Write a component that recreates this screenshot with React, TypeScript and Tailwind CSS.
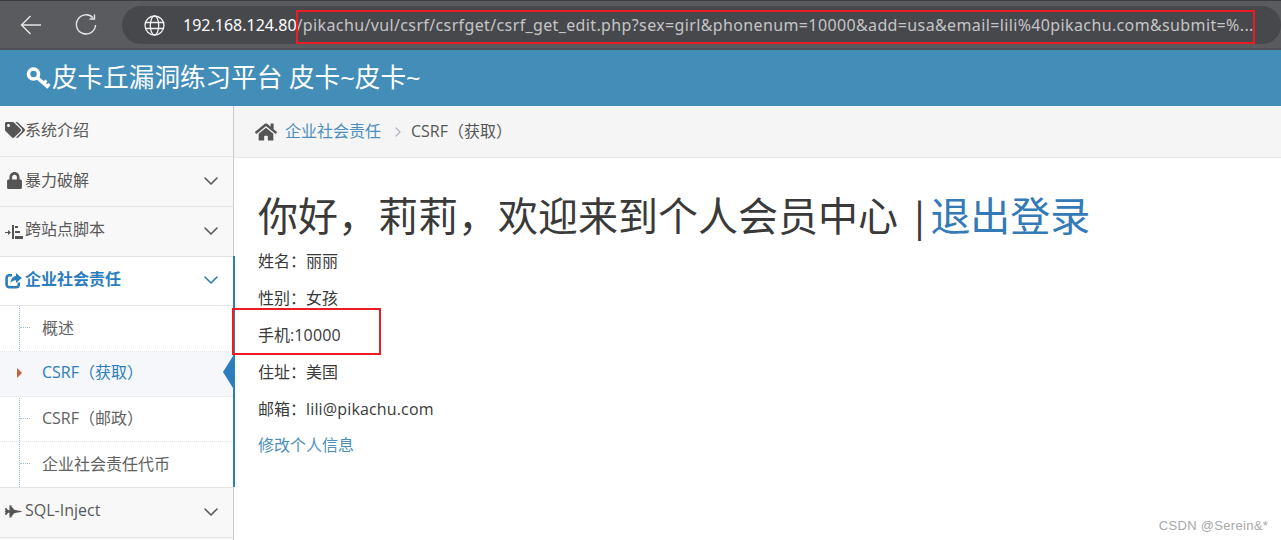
import { FaTags, FaLock, FaHome, FaFighterJet } from "react-icons/fa";
import { FiChevronDown, FiChevronRight } from "react-icons/fi";

function IndentIcon() {
  return (
    <svg width="18" height="14" viewBox="0 0 18 14" className="text-[#555]" fill="currentColor">
      <rect x="0" y="7" width="4" height="1" />
      <path d="M3 5 L6 7.5 L3 10Z" />
      <rect x="7" y="0" width="2" height="14" />
      <rect x="10" y="1" width="3" height="2" />
      <rect x="10" y="6" width="5" height="2" />
      <rect x="10" y="11" width="8" height="3" />
    </svg>
  );
}

function BackIcon() {
  return (
    <svg width="22" height="20" viewBox="0 0 22 20" fill="none" stroke="#e6e6e6" strokeWidth="1.4">
      <path d="M21 10H1.5M10.5 1 1.5 10l9 9" />
    </svg>
  );
}

function ReloadIcon() {
  return (
    <svg width="22" height="22" viewBox="0 0 22 22" fill="none" stroke="#e6e6e6" strokeWidth="1.4">
      <path d="M18 3.8A9.6 9.6 0 1 0 20.6 11" />
      <path d="M19.5 0.5V5H14.5" />
    </svg>
  );
}

function GlobeIcon() {
  return (
    <svg width="21" height="21" viewBox="0 0 21 21" fill="none" stroke="#f0f0f0" strokeWidth="1.3" className="shrink-0">
      <circle cx="10.5" cy="10.5" r="9.5" />
      <ellipse cx="10.5" cy="10.5" rx="4.2" ry="9.5" />
      <path d="M1.5 7.5H19.5M1.5 13.5H19.5" />
    </svg>
  );
}

function KeyIcon() {
  return (
    <svg width="25" height="25" viewBox="0 0 25 25" fill="none" stroke="#fff" className="shrink-0 -ml-[1px] mr-[1px]">
      <circle cx="7.5" cy="8" r="5" strokeWidth="3.6" />
      <path d="M11 11.5 22.5 21.5" strokeWidth="3.6" />
      <path d="M17.5 17.5 20.5 14.5M21 20.5 23.5 18" strokeWidth="3" />
    </svg>
  );
}

function ShareIcon() {
  return (
    <svg width="17" height="16" viewBox="0 0 17 16" className="text-[#2b7dbc]">
      <path d="M7 2.2H4.5A2.8 2.8 0 0 0 1.6 5v6.5a2.8 2.8 0 0 0 2.9 2.8H11a2.8 2.8 0 0 0 2.8-2.8V9.5" fill="none" stroke="currentColor" strokeWidth="2.6" />
      <path d="M11 0 16.8 5 11 10V7.2C8.5 7.2 6.6 8 5.6 10.2 5.6 6.4 7.6 3.4 11 3Z" fill="currentColor" />
    </svg>
  );
}

function TopRow({ icon, label, chevron = true, active = false, h = "h-[50px]", offset = "" }: { icon: React.ReactNode; label: string; chevron?: boolean; active?: boolean; h?: string; offset?: string }) {
  return (
    <div className={`${h} flex items-center border-b border-[#e5e5e5] pl-[5px] pr-[10px] ${active ? "bg-white text-[#2b7dbc] font-bold" : "bg-[#f8f8f8] text-[#585858]"}`}>
      <span className="w-[20px] flex items-center shrink-0">{icon}</span>
      <span className={`flex-1 text-[16px] leading-5 ${offset}`}>{label}</span>
      {chevron && <FiChevronDown size={24} strokeWidth={1.6} className="shrink-0 -mt-[2px]" />}
    </div>
  );
}

function SubRow({ label, active = false, h = "h-[45px]", border = true, offset = "" }: { label: string; active?: boolean; h?: string; border?: boolean; offset?: string }) {
  return (
    <div className={`${h} relative flex items-center pl-[42px] text-[16px] ${border ? "border-b border-dotted border-[#e4e4e4]" : ""} ${active ? "bg-[#f5f7fa] text-[#2b7dbc]" : "text-[#616161]"}`}>
      {active ? (
        <span className="absolute left-[17px] top-[16px] border-l-[5px] border-y-[5px] border-y-transparent border-l-[#c86139]" />
      ) : (
        <span className="absolute left-[20px] top-[21px] w-[10px] border-t border-dotted border-[#9dbdd6]" />
      )}
      {active && <span className="absolute right-0 top-[4px] border-r-[10px] border-y-[16px] border-y-transparent border-r-[#2b7dbc]" />}
      <span className={offset}>{label}</span>
    </div>
  );
}

export default function App() {
  return (
    <div
      className="relative w-[1281px] h-[540px] overflow-hidden bg-white flex flex-col"
      style={{ fontFamily: '"Open Sans", "Noto Sans CJK SC", sans-serif' }}
    >
      {/* browser toolbar */}
      <div className="h-[50px] shrink-0 bg-[#5a5b5f] border-t border-[#3c3d41] border-b-2 border-b-[#505054] flex items-center pl-[20px] text-white">
        <BackIcon />
        <span className="ml-[33px]"><ReloadIcon /></span>
        <div className="ml-[25px] flex-1 h-[38px] mt-[1px] rounded-[19px] bg-[#47484c] flex items-center pl-[22px] overflow-hidden">
          <GlobeIcon />
          <span className="ml-[18px] text-[16px] whitespace-nowrap" style={{ fontFamily: '"Noto Sans", sans-serif' }}>
            <span className="text-white">192.168.124.80</span>
            <span className="text-[#c4c5c7] tracking-[0.37px]">/pikachu/vul/csrf/csrfget/csrf_get_edit.php?sex=girl&amp;phonenum=10000&amp;add=usa&amp;email=lili%40pikachu.com&amp;submit=%...</span>
          </span>
        </div>
      </div>

      {/* blue header */}
      <div className="h-[56px] shrink-0 bg-[#438eb9] flex items-center pl-[27px] text-white text-[25.6px]">
        <KeyIcon />
        <span className="whitespace-nowrap">皮卡丘漏洞练习平台 皮卡~皮卡~</span>
      </div>

      <div className="flex-1 flex min-h-0">
        {/* sidebar */}
        <div className="w-[234px] shrink-0 border-r border-[#cccccc] flex flex-col bg-[#f8f8f8]">
          <TopRow icon={<FaTags size={20} className="text-[#555] -mt-[3px]" />} label="系统介绍" chevron={false} h="h-[51px]" offset="-mt-[2px]" />
          <TopRow icon={<FaLock size={17} className="text-[#555] ml-[1px] -mt-[2px]" />} label="暴力破解" offset="-mt-[4px]" />
          <TopRow icon={<IndentIcon />} label="跨站点脚本" offset="-mt-[6px]" />
          <div className="relative -mt-px pt-px border-r-2 border-[#2b7dbc] -mr-[2px]">
            <TopRow active icon={<ShareIcon />} label="企业社会责任" h="h-[49px]" offset="-mt-[4px]" />
            <div className="relative bg-white">
              <span className="absolute left-[19px] top-0 bottom-0 border-l border-dotted border-[#9dbdd6]" />
              <SubRow label="概述" h="h-[46px]" offset="-mt-[2px]" />
              <SubRow label="CSRF（获取）" active offset="-mt-[4px]" />
              <SubRow label="CSRF（邮政）" offset="-mt-[3px]" />
              <SubRow label="企业社会责任代币" border={false} offset="-mt-[2px]" />
            </div>
          </div>
          <div className="border-t border-[#e5e5e5]">
            <TopRow icon={<FaFighterJet size={17} className="text-[#555] -mt-[2px]" />} label="SQL-Inject" h="h-[50px]" offset="-mt-[6px]" />
          </div>
        </div>

        {/* main */}
        <div className="flex-1 min-w-0 flex flex-col text-[#393939]">
          <div className="h-[52px] shrink-0 bg-[#f5f5f5] border-b border-[#e5e5e5] flex items-center pl-[21px] text-[16px]">
            <FaHome size={22} className="text-[#555]" />
            <span className="ml-[8px] text-[#4c8fbd] -mt-[2px]">企业社会责任</span>
            <FiChevronRight size={16} strokeWidth={1.8} className="ml-[9px] text-[#b2b6bf]" />
            <span className="ml-[5px] text-[#555] -mt-[2px]">CSRF（获取）</span>
          </div>
          <div className="pl-[24px] pt-[28px] flex flex-col">
            <div className="text-[40px] leading-[60px] whitespace-nowrap text-[#3a3a3a]">
              你好，莉莉，欢迎来到个人会员中心 |<a className="text-[#337ab7]">退出登录</a>
            </div>
            <div className="flex flex-col gap-[17px] text-[16px] leading-[20px] mt-[5px]">
              <p>姓名：丽丽</p>
              <p>性别：女孩</p>
              <p>手机:<span className="tracking-[0.2px]">10000</span></p>
              <p>住址：美国</p>
              <p>邮箱：<span className="tracking-[0.15px]">lili@pikachu.com</span></p>
              <a className="text-[#4c8fbd] -mt-[1px]">修改个人信息</a>
            </div>
          </div>
        </div>
      </div>

      {/* overlays */}
      <div className="absolute left-[296px] top-[10px] w-[959px] h-[34px] border-2 border-[#ed1c24]" />
      <div className="absolute left-[232px] top-[308px] w-[149px] h-[47px] border-2 border-[#ed1c24]" />
      <div className="absolute right-[13px] bottom-[5px] text-[13px] text-[#a8a8a8] tracking-[0.3px]" style={{ fontFamily: '"Liberation Sans", sans-serif' }}>CSDN @Serein&amp;*</div>
    </div>
  );
}
